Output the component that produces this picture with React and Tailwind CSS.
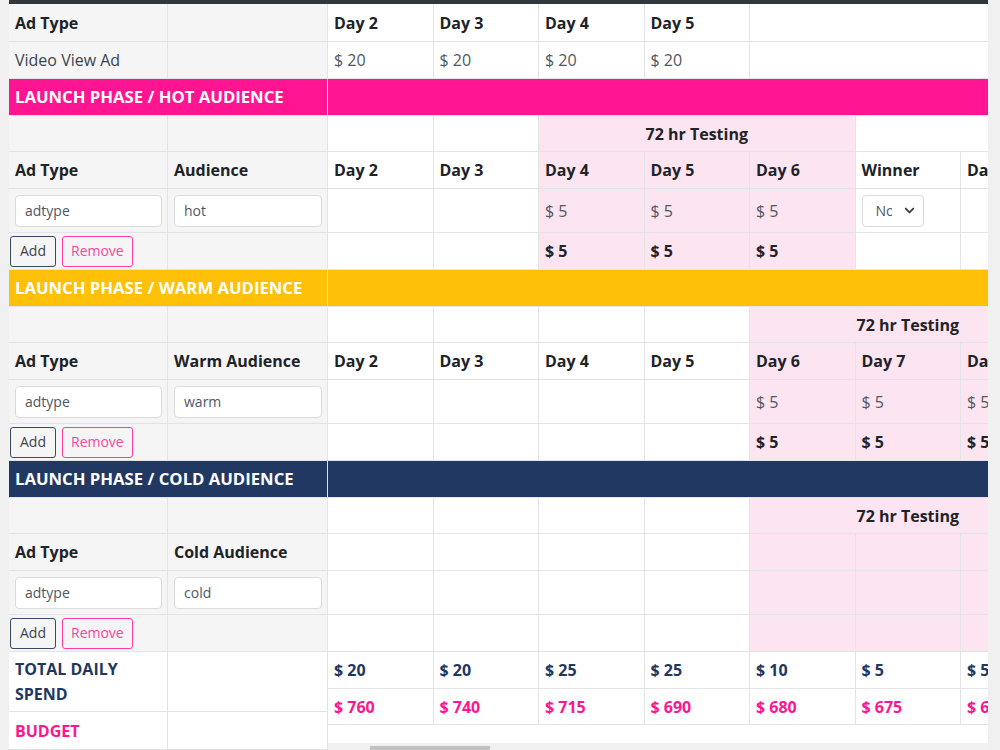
import React from "react";
import clsx from "clsx";
import { ChevronDown } from "lucide-react";

const Row = ({ h, className, children }) => (
  <div className={clsx("flex border-b border-[#e2e4e7]", h, className)}>{children}</div>
);

// left (sticky) columns
const L = ({ children, second, flush, className }) => (
  <div
    className={clsx(
      "shrink-0 flex items-center border-r border-[#e2e4e7]",
      second ? "w-[160px]" : "w-[159px]",
      flush ? "pl-[1px]" : "pl-[6px] pr-[5px]",
      className
    )}
  >
    {children}
  </div>
);

// right (scrolling) day columns
const C = ({ children, pink, span, className }) => (
  <div
    className={clsx(
      "shrink-0 flex items-center px-[6px] border-r border-[#e2e4e7]",
      span ? "w-[316.5px] justify-center" : "w-[105.5px]",
      pink && "bg-[#fde4f1]",
      className
    )}
  >
    {children}
  </div>
);

const Fill = ({ pink }) => <div className={clsx("flex-1", pink && "bg-[#fde4f1]")} />;

const B = ({ children }) => <span className="font-bold text-[#1d2327]">{children}</span>;
const V = ({ children }) => <span className="text-[#50575e]">{children}</span>;

const Input = ({ value }) => (
  <input
    readOnly
    defaultValue={value}
    className="w-full h-[32px] border border-[#d9dbde] rounded-[4px] bg-white px-[9px] text-[14px] text-[#50575e] outline-none"
  />
);

const Buttons = () => (
  <div className="flex items-center gap-[6px]">
    <button className="h-[31px] px-[9px] border border-[#3a4a66] rounded-[3px] text-[14px] leading-[20px] text-[#3c434a] bg-transparent">
      Add
    </button>
    <button className="h-[31px] px-[8px] border border-[#ff3d9e] rounded-[3px] text-[14px] leading-[20px] text-[#f4489c] bg-transparent">
      Remove
    </button>
  </div>
);

const Section = ({ title, color, audience, value }) => (
  <>
    <Row h="h-[37px]" className={color}>
      <div className="w-[319px] shrink-0 flex items-center px-[6px] border-r border-[#e2e4e7] font-bold text-white text-[16.7px]">
        {title}
      </div>
    </Row>
    <Row h="h-[36px]">
      <L />
      <L second />
    </Row>
    <Row h="h-[37px]">
      <L><B>Ad Type</B></L>
      <L second><B>{audience}</B></L>
    </Row>
    <Row h="h-[44px]">
      <L><Input value="adtype" /></L>
      <L second><Input value={value} /></L>
    </Row>
    <Row h="h-[37px]">
      <L flush><Buttons /></L>
      <L second />
    </Row>
  </>
);

const Bar = ({ color }) => <Row h="h-[37px]" className={color}><Fill /></Row>;

export default function App() {
  return (
    <div className="min-h-screen bg-[#f0f0f1] pl-[9px] font-['Open_Sans',sans-serif] text-[16px] leading-[24px]">
      <div className="h-[4px] w-[979px] bg-[#32373c]" />
      <div className="flex w-[979px] items-start">
        {/* left columns */}
        <div className="w-[319px] shrink-0 bg-[#f5f5f5]">
          <Row h="h-[38px]">
            <L><B>Ad Type</B></L>
            <L second />
          </Row>
          <Row h="h-[37px]">
            <L><span className="text-[#3c434a]">Video View Ad</span></L>
            <L second />
          </Row>
          <Section title="LAUNCH PHASE / HOT AUDIENCE" color="bg-[#ff1491]" audience="Audience" value="hot" />
          <Section title="LAUNCH PHASE / WARM AUDIENCE" color="bg-[#ffc107]" audience="Warm Audience" value="warm" />
          <Section title="LAUNCH PHASE / COLD AUDIENCE" color="bg-[#213862]" audience="Cold Audience" value="cold" />
          <Row h="h-[60px]" className="bg-white">
            <L className="font-bold text-[#22375f] leading-[25px]">TOTAL DAILY SPEND</L>
            <L second />
          </Row>
          <Row h="h-[38px]" className="bg-white">
            <L className="font-bold text-[#ff1491]">BUDGET</L>
            <L second />
          </Row>
        </div>

        {/* scrolling day columns */}
        <div className="w-[660px] overflow-hidden bg-white">
          <div className="w-[1160px]">
            <Row h="h-[38px]">
              <C><B>Day 2</B></C>
              <C><B>Day 3</B></C>
              <C><B>Day 4</B></C>
              <C><B>Day 5</B></C>
              <Fill />
            </Row>
            <Row h="h-[37px]">
              <C><V>$ 20</V></C>
              <C><V>$ 20</V></C>
              <C><V>$ 20</V></C>
              <C><V>$ 20</V></C>
              <Fill />
            </Row>

            {/* hot */}
            <Bar color="bg-[#ff1491]" />
            <Row h="h-[36px]">
              <C />
              <C />
              <C span pink><B>72 hr Testing</B></C>
              <Fill />
            </Row>
            <Row h="h-[37px]">
              <C><B>Day 2</B></C>
              <C><B>Day 3</B></C>
              <C pink><B>Day 4</B></C>
              <C pink><B>Day 5</B></C>
              <C pink><B>Day 6</B></C>
              <C><B>Winner</B></C>
              <C><B>Day 7</B></C>
              <C><B>Day 8</B></C>
              <Fill />
            </Row>
            <Row h="h-[44px]">
              <C />
              <C />
              <C pink><V>$ 5</V></C>
              <C pink><V>$ 5</V></C>
              <C pink><V>$ 5</V></C>
              <C>
                <div className="w-[62px] h-[32px] border border-[#d9dbde] rounded-[4px] bg-white flex items-center pl-[13px] pr-[6px] text-[14px] text-[#50575e]">
                  <span className="w-[16px] overflow-hidden whitespace-nowrap">No</span>
                  <ChevronDown size={15} strokeWidth={3.2} className="ml-auto text-[#3c434a]" />
                </div>
              </C>
              <C />
              <C />
              <Fill />
            </Row>
            <Row h="h-[37px]">
              <C />
              <C />
              <C pink><B>$ 5</B></C>
              <C pink><B>$ 5</B></C>
              <C pink><B>$ 5</B></C>
              <C />
              <C />
              <C />
              <Fill />
            </Row>

            {/* warm */}
            <Bar color="bg-[#ffc107]" />
            <Row h="h-[36px]">
              <C />
              <C />
              <C />
              <C />
              <C span pink><B>72 hr Testing</B></C>
              <Fill />
            </Row>
            <Row h="h-[37px]">
              <C><B>Day 2</B></C>
              <C><B>Day 3</B></C>
              <C><B>Day 4</B></C>
              <C><B>Day 5</B></C>
              <C pink><B>Day 6</B></C>
              <C pink><B>Day 7</B></C>
              <C pink><B>Day 8</B></C>
              <C><B>Winner</B></C>
              <Fill />
            </Row>
            <Row h="h-[44px]">
              <C />
              <C />
              <C />
              <C />
              <C pink><V>$ 5</V></C>
              <C pink><V>$ 5</V></C>
              <C pink><V>$ 5</V></C>
              <C />
              <Fill />
            </Row>
            <Row h="h-[37px]">
              <C />
              <C />
              <C />
              <C />
              <C pink><B>$ 5</B></C>
              <C pink><B>$ 5</B></C>
              <C pink><B>$ 5</B></C>
              <C />
              <Fill />
            </Row>

            {/* cold */}
            <Bar color="bg-[#213862]" />
            <Row h="h-[36px]">
              <C />
              <C />
              <C />
              <C />
              <C span pink><B>72 hr Testing</B></C>
              <Fill />
            </Row>
            <Row h="h-[37px]">
              <C />
              <C />
              <C />
              <C />
              <C pink />
              <C pink />
              <C pink />
              <C />
              <Fill />
            </Row>
            <Row h="h-[44px]">
              <C />
              <C />
              <C />
              <C />
              <C pink />
              <C pink />
              <C pink />
              <C />
              <Fill />
            </Row>
            <Row h="h-[37px]">
              <C />
              <C />
              <C />
              <C />
              <C pink />
              <C pink />
              <C pink />
              <C />
              <Fill />
            </Row>

            {/* totals */}
            <Row h="h-[37px]" className="font-bold text-[#22375f]">
              <C>$ 20</C>
              <C>$ 20</C>
              <C>$ 25</C>
              <C>$ 25</C>
              <C>$ 10</C>
              <C>$ 5</C>
              <C>$ 5</C>
              <C>$ 5</C>
              <Fill />
            </Row>
            <Row h="h-[36px]" className="font-bold text-[#ff1491]">
              <C>$ 760</C>
              <C>$ 740</C>
              <C>$ 715</C>
              <C>$ 690</C>
              <C>$ 680</C>
              <C>$ 675</C>
              <C>$ 670</C>
              <C>$ 665</C>
              <Fill />
            </Row>
          </div>
          <div className="h-[18px]" />
          <div className="h-[15px] bg-[#f1f1f1] pt-[3px]">
            <div className="ml-[42px] w-[120px] h-[9px] bg-[#c1c1c1]" />
          </div>
        </div>
      </div>
    </div>
  );
}
